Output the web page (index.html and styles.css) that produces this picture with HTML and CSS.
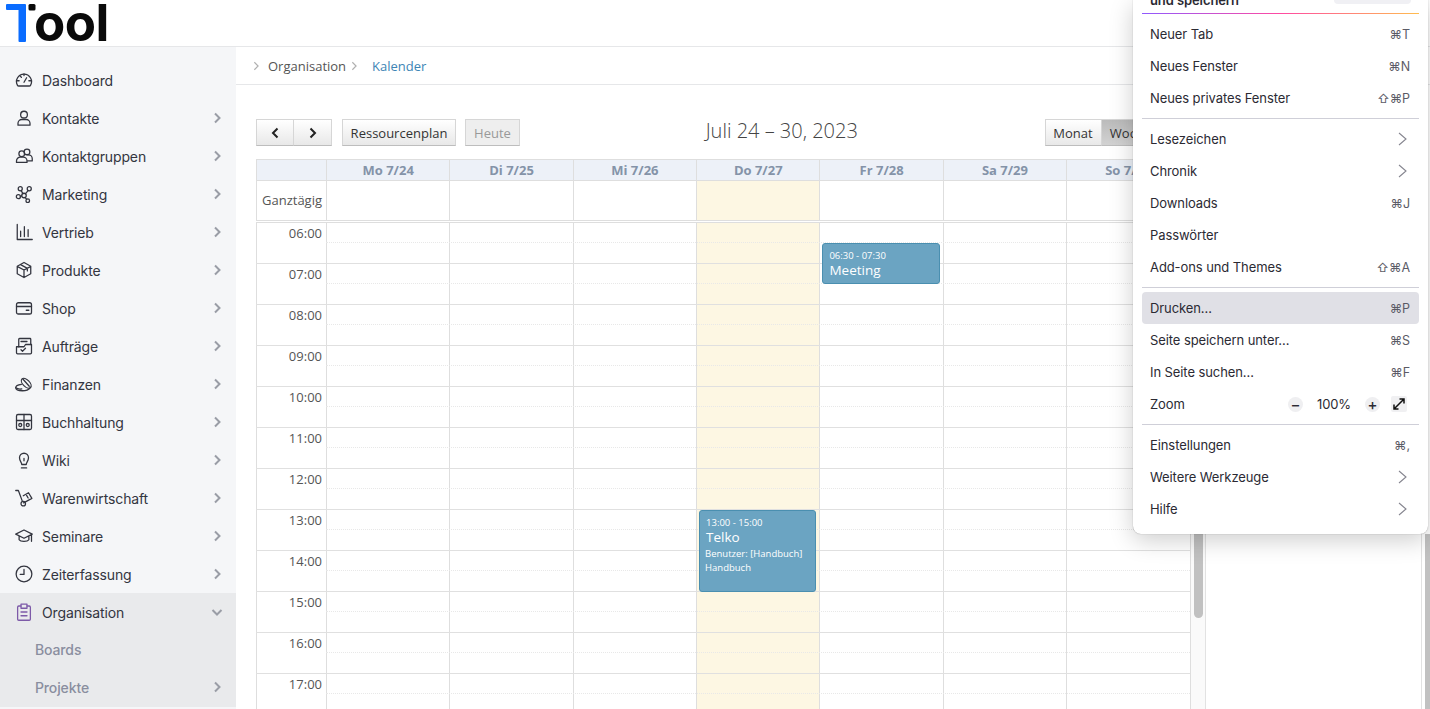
FILE: index.html
```html
<!DOCTYPE html>
<html lang="de">
<head>
<meta charset="utf-8">
<title>Kalender</title>
<link rel="stylesheet" href="styles.css">
</head>
<body>
<header class="topbar">
  <div class="logo">
    <svg class="logo-mark" viewBox="0 0 30 38" aria-hidden="true"><path class="logo-blue" d="M1 0h18a1 1 0 0 1 1 1v36a1 1 0 0 1-1 1h-5.500a1 1 0 0 1-1-1V6H1a1 1 0 0 1-1-1V1a1 1 0 0 1 1-1z"/><rect class="logo-black" x="22.500" y="0" width="7" height="6.500" rx="1.500"/></svg>
    <span class="logo-text">ool</span>
  </div>
</header>
<div class="layout">
  <nav class="sidebar">
    <a class="nav-item"><svg class="ico" viewBox="0 0 24 24"><path d="M5 20h14a2 2 0 0 0 1.800-1.100A10 10 0 1 0 3.200 18.900 2 2 0 0 0 5 20z"/><path d="M12 15l3.500-6M7 6.500l1.500 2M3 13h2.500M18.500 13H21M12 4v2"/></svg><span class="nav-label">Dashboard</span></a>
    <a class="nav-item"><svg class="ico" viewBox="0 0 24 24"><circle cx="12" cy="7.500" r="4.500"/><path d="M4 21.500v-2.500a5 5 0 0 1 5-5h6a5 5 0 0 1 5 5v2.500z"/></svg><span class="nav-label">Kontakte</span><svg class="chev" viewBox="0 0 8 12"><path d="M2 1.500L6.500 6 2 10.500"/></svg></a>
    <a class="nav-item"><svg class="ico" viewBox="0 0 24 24"><circle cx="9" cy="9" r="3.800"/><circle cx="16" cy="6.500" r="3.800"/><path d="M2 20.500v-2a5 5 0 0 1 5-5h4a5 5 0 0 1 5 5v2zM16 10.500h2a5 5 0 0 1 5 5v3h-7"/></svg><span class="nav-label">Kontaktgruppen</span><svg class="chev" viewBox="0 0 8 12"><path d="M2 1.500L6.500 6 2 10.500"/></svg></a>
    <a class="nav-item"><svg class="ico" viewBox="0 0 24 24"><circle cx="7" cy="5" r="2.700"/><circle cx="19" cy="5" r="2.700"/><circle cx="12" cy="14" r="3"/><circle cx="4.500" cy="15.500" r="2.700"/><circle cx="17" cy="21" r="2.400"/><path d="M8.300 7.500l2.200 4M17.500 7.500L14 11.500M7.200 15.200L9 14.600M13.500 16.800l2.200 2.300"/></svg><span class="nav-label">Marketing</span><svg class="chev" viewBox="0 0 8 12"><path d="M2 1.500L6.500 6 2 10.500"/></svg></a>
    <a class="nav-item"><svg class="ico" viewBox="0 0 24 24"><path d="M3 2v20h20M7.500 18v-7M12.500 18V5M17.500 18v-9"/></svg><span class="nav-label">Vertrieb</span><svg class="chev" viewBox="0 0 8 12"><path d="M2 1.500L6.500 6 2 10.500"/></svg></a>
    <a class="nav-item"><svg class="ico" viewBox="0 0 24 24"><path d="M12 2l9 5v10l-9 5-9-5V7zM3.500 7.500L12 12l8.500-4.500M12 12v10M7.500 4.800l9 5v3.500"/></svg><span class="nav-label">Produkte</span><svg class="chev" viewBox="0 0 8 12"><path d="M2 1.500L6.500 6 2 10.500"/></svg></a>
    <a class="nav-item"><svg class="ico" viewBox="0 0 24 24"><rect x="2" y="5" width="20" height="15" rx="2.500"/><path d="M2 10h20M15 15h3.500"/></svg><span class="nav-label">Shop</span><svg class="chev" viewBox="0 0 8 12"><path d="M2 1.500L6.500 6 2 10.500"/></svg></a>
    <a class="nav-item"><svg class="ico" viewBox="0 0 24 24"><path d="M5 13V3a1 1 0 0 1 1-1h14a1 1 0 0 1 1 1v7"/><path d="M2 13h10l2-3h8v11a1.500 1.500 0 0 1-1.500 1.500h-17A1.500 1.500 0 0 1 2 21zM8 6h8M8 17l2 2 4-4"/></svg><span class="nav-label">Aufträge</span><svg class="chev" viewBox="0 0 8 12"><path d="M2 1.500L6.500 6 2 10.500"/></svg></a>
    <a class="nav-item"><svg class="ico" viewBox="0 0 24 24"><ellipse cx="15" cy="11" rx="4.500" ry="8" transform="rotate(-45 15 11)"/><path d="M11 6l8 9M8.500 12.500C4 13 1 15 1 17c0 2.500 4 4 9 4 4 0 8-1 10-3.500"/><path d="M1 17c2 1.500 5 2 8 1.500"/></svg><span class="nav-label">Finanzen</span><svg class="chev" viewBox="0 0 8 12"><path d="M2 1.500L6.500 6 2 10.500"/></svg></a>
    <a class="nav-item"><svg class="ico" viewBox="0 0 24 24"><rect x="2" y="2" width="20" height="20" rx="2"/><path d="M2 10h20M12 2v20"/><circle cx="7" cy="16" r="2"/><circle cx="17" cy="16" r="2"/></svg><span class="nav-label">Buchhaltung</span><svg class="chev" viewBox="0 0 8 12"><path d="M2 1.500L6.500 6 2 10.500"/></svg></a>
    <a class="nav-item"><svg class="ico" viewBox="0 0 24 24"><path d="M9 18h6c0-3 3-4.500 3-9A6 6 0 0 0 6 9c0 4.500 3 6 3 9zM8.500 22.500h7M12 10v3"/></svg><span class="nav-label">Wiki</span><svg class="chev" viewBox="0 0 8 12"><path d="M2 1.500L6.500 6 2 10.500"/></svg></a>
    <a class="nav-item"><svg class="ico" viewBox="0 0 24 24"><path d="M1 2h3.500l5 13.500M11 9l7-4 4.500 7.500-11 6"/><circle cx="11" cy="19.500" r="3"/><path d="M15.500 8.500l2 3.500"/></svg><span class="nav-label">Warenwirtschaft</span><svg class="chev" viewBox="0 0 8 12"><path d="M2 1.500L6.500 6 2 10.500"/></svg></a>
    <a class="nav-item"><svg class="ico" viewBox="0 0 24 24"><path d="M12 4L1 9.500 12 15l11-5.500zM5.500 12v5c2 3 11 3 13 0v-5M22 10v9"/></svg><span class="nav-label">Seminare</span><svg class="chev" viewBox="0 0 8 12"><path d="M2 1.500L6.500 6 2 10.500"/></svg></a>
    <a class="nav-item"><svg class="ico" viewBox="0 0 24 24"><circle cx="12" cy="12" r="10.500"/><path d="M12 6v6.500H7"/></svg><span class="nav-label">Zeiterfassung</span><svg class="chev" viewBox="0 0 8 12"><path d="M2 1.500L6.500 6 2 10.500"/></svg></a>
    <a class="nav-item nav-open"><svg class="ico ico-purple" viewBox="0 0 24 24"><path d="M8 4H5a1.500 1.500 0 0 0-1.500 1.500v16A1.500 1.500 0 0 0 5 23h14a1.500 1.500 0 0 0 1.500-1.500v-16A1.500 1.500 0 0 0 19 4h-3"/><path d="M8 1.500h8V7H8zM8 12h8M8 17h8"/></svg><span class="nav-label">Organisation</span><svg class="chev chev-down" viewBox="0 0 12 8"><path d="M1.500 2L6 6.500 10.500 2"/></svg></a>
    <a class="nav-sub"><span class="nav-label">Boards</span></a>
    <a class="nav-sub"><span class="nav-label">Projekte</span><svg class="chev" viewBox="0 0 8 12"><path d="M2 1.500L6.500 6 2 10.500"/></svg></a>
  </nav>

  <main class="main">
    <div class="crumbs">
      <svg class="crumb-chev" viewBox="0 0 8 12"><path d="M2 1.500L6.500 6 2 10.500"/></svg>
      <span class="crumb">Organisation</span>
      <svg class="crumb-chev crumb-chev-mid" viewBox="0 0 8 12"><path d="M2 1.500L6.500 6 2 10.500"/></svg>
      <span class="crumb crumb-active">Kalender</span>
    </div>
    <div class="workspace">
      <section class="calendar">
        <div class="toolbar">
          <div class="tool-left">
            <div class="btn-group">
              <button class="btn btn-nav"><svg class="nav-arrow" viewBox="0 0 10 12"><path d="M7.500 1.500L3 6l4.500 4.500"/></svg></button>
              <button class="btn btn-nav"><svg class="nav-arrow" viewBox="0 0 10 12"><path d="M2.500 1.500L7 6l-4.500 4.500"/></svg></button>
            </div>
            <button class="btn btn-res">Ressourcenplan</button>
            <button class="btn btn-off">Heute</button>
          </div>
          <h1 class="cal-title">Juli 24 – 30, 2023</h1>
          <div class="btn-group">
            <button class="btn btn-month">Monat</button>
            <button class="btn btn-active btn-week">Woche</button>
            <button class="btn btn-day">Tag</button>
          </div>
        </div>

        <div class="cal-head">
          <div class="hd"></div><div class="hd">Mo 7/24</div><div class="hd">Di 7/25</div><div class="hd">Mi 7/26</div><div class="hd">Do 7/27</div><div class="hd">Fr 7/28</div><div class="hd">Sa 7/29</div><div class="hd">So 7/30</div>
          <div class="allday allday-label">Ganztägig</div><div class="allday"></div><div class="allday"></div><div class="allday"></div><div class="allday today"></div><div class="allday"></div><div class="allday"></div><div class="allday"></div>
        </div>

        <div class="cal-body">
          <div class="cols">
            <div class="col"></div>
            <div class="col"></div>
            <div class="col"></div>
            <div class="col"></div>
            <div class="col today">
              <div class="event ev-telko">
                <div class="ev-time">13:00 - 15:00</div>
                <div class="ev-title">Telko</div>
                <div class="ev-note">Benutzer: [Handbuch]</div>
                <div class="ev-note">Handbuch</div>
              </div>
            </div>
            <div class="col">
              <div class="event ev-meeting">
                <div class="ev-time">06:30 - 07:30</div>
                <div class="ev-title">Meeting</div>
              </div>
            </div>
            <div class="col"></div>
            <div class="col"></div>
          </div>
          <div class="slot">06:00</div>
          <div class="slot">07:00</div>
          <div class="slot">08:00</div>
          <div class="slot">09:00</div>
          <div class="slot">10:00</div>
          <div class="slot">11:00</div>
          <div class="slot">12:00</div>
          <div class="slot">13:00</div>
          <div class="slot">14:00</div>
          <div class="slot">15:00</div>
          <div class="slot">16:00</div>
          <div class="slot">17:00</div>
        </div>
      </section>
      <div class="cal-scroll"><div class="cal-thumb"></div></div>
      <aside class="panel"></aside>
      <div class="page-scroll"></div>
    </div>
  </main>
</div>

<div class="menu">
  <div class="menu-top"><span class="menu-top-text">und speichern</span><span class="menu-top-btn"></span></div>
  <div class="sep sep-grad"></div>
  <div class="row"><span>Neuer Tab</span><kbd class="key">⌘T</kbd></div>
  <div class="row"><span>Neues Fenster</span><kbd class="key">⌘N</kbd></div>
  <div class="row"><span>Neues privates Fenster</span><kbd class="key">⇧⌘P</kbd></div>
  <div class="sep"></div>
  <div class="row"><span>Lesezeichen</span><svg class="sub-chev" viewBox="0 0 9 14"><path d="M1 1l7 6-7 6"/></svg></div>
  <div class="row"><span>Chronik</span><svg class="sub-chev" viewBox="0 0 9 14"><path d="M1 1l7 6-7 6"/></svg></div>
  <div class="row"><span>Downloads</span><kbd class="key">⌘J</kbd></div>
  <div class="row"><span>Passwörter</span></div>
  <div class="row"><span>Add-ons und Themes</span><kbd class="key">⇧⌘A</kbd></div>
  <div class="sep"></div>
  <div class="row row-hover"><span>Drucken…</span><kbd class="key">⌘P</kbd></div>
  <div class="row"><span>Seite speichern unter…</span><kbd class="key">⌘S</kbd></div>
  <div class="row"><span>In Seite suchen…</span><kbd class="key">⌘F</kbd></div>
  <div class="row">
    <span class="zoom-label">Zoom</span>
    <span class="zoom-btn">−</span>
    <span class="zoom-val">100%</span>
    <span class="zoom-btn">+</span>
    <span class="zoom-full"><svg viewBox="0 0 16 16"><path d="M3.500 12.500l9-9M8.500 3h4.500v4.500M3 8.500V13h4.500"/></svg></span>
  </div>
  <div class="sep"></div>
  <div class="row"><span>Einstellungen</span><kbd class="key">⌘,</kbd></div>
  <div class="row"><span>Weitere Werkzeuge</span><svg class="sub-chev" viewBox="0 0 9 14"><path d="M1 1l7 6-7 6"/></svg></div>
  <div class="row"><span>Hilfe</span><svg class="sub-chev" viewBox="0 0 9 14"><path d="M1 1l7 6-7 6"/></svg></div>
</div>
</body>
</html>
```

FILE: styles.css
```css
* { box-sizing: border-box; }
html, body { margin: 0; height: 709px; overflow: hidden; background: #fff; }
body { font-family: Inter, "Noto Sans", sans-serif; position: relative; }

.topbar { height: 47px; border-bottom: 1px solid #e6e7e9; display: flex; align-items: flex-start; }
.logo { display: flex; align-items: flex-start; margin-left: 6px; margin-top: 4px; }
.logo-mark { width: 30px; height: 38px; flex: none; }
.logo-blue { fill: #0a6cff; }
.logo-black { fill: #0a0a0a; }
.logo-text { font-family: Inter, sans-serif; font-weight: 700; font-size: 51px; line-height: 62px; margin-top: -12px; color: #0a0a0a; margin-left: -2px; letter-spacing: -0.5px; }

.layout { display: flex; height: 662px; }
.sidebar { width: 236px; flex: none; background: #f5f6f8; padding-top: 14px; height: 662px; overflow: hidden; }
.nav-item, .nav-sub { display: flex; align-items: center; height: 38px; color: #33353f; font-size: 14px; letter-spacing: -0.13px; padding-left: 15px; padding-right: 15px; }
.nav-item .nav-label { margin-left: 9px; flex: 1; }
.nav-open { background: #e9eaec; }
.nav-sub { background: #e9eaec; color: #8a8e9f; font-weight: 500; padding-left: 35px; padding-bottom: 2px; }
.nav-sub .nav-label { flex: 1; }
.ico { width: 18px; height: 18px; flex: none; fill: none; stroke: #33353f; stroke-width: 1.7; stroke-linecap: round; stroke-linejoin: round; }
.ico-purple { stroke: #7d5aa8; }
.chev { width: 8px; height: 12px; fill: none; stroke: #9a9da6; stroke-width: 2; flex: none; }
.chev-down { width: 12px; height: 8px; margin-right: -2px; }

.main { flex: 1; min-width: 0; display: flex; flex-direction: column; }
.crumbs { height: 38px; border-bottom: 1px solid #e6e7e9; display: flex; align-items: center; padding-left: 16px; font-family: "Open Sans", sans-serif; font-size: 13px; color: #555; flex: none; }
.crumb-chev { width: 8px; height: 10px; fill: none; stroke: #b0b0b0; stroke-width: 1.4; margin-right: 8px; }
.crumb-chev-mid { margin-left: 4px; margin-right: 14px; }
.crumb-active { color: #3d85b5; }

.workspace { flex: 1; display: flex; padding-left: 20px; min-height: 0; }
.calendar { width: 934.500px; flex: none; padding-top: 34px; font-family: "Open Sans", sans-serif; }
.toolbar { display: flex; align-items: flex-start; justify-content: space-between; height: 40px; }
.tool-left { display: flex; gap: 9px; }
.btn-group { display: flex; }
.btn { height: 27px; padding: 0; font-family: "Open Sans", sans-serif; font-size: 13px; color: #333; border: 1px solid #d6d6d6; border-bottom-color: #bdbdbd; background: linear-gradient(#fff, #e8e8e8); display: flex; align-items: center; justify-content: center; }
.btn-nav { width: 38px; }
.btn-nav + .btn-nav { width: 39px; margin-left: -1px; }
.nav-arrow { width: 10px; height: 12px; fill: none; stroke: #222; stroke-width: 2; }
.btn-res { width: 114px; margin-left: 1px; }
.btn-off { width: 55px; color: #999; background: #eee; }
.btn-month { width: 57px; }
.btn-week { width: 60px; margin-left: -1px; }
.btn-day { width: 31px; margin-left: -1px; }
.btn-active { background: linear-gradient(#bbb, #d2d2d2); }
.cal-title { margin: 0 1px 0 0; font-weight: 300; font-size: 20px; line-height: 24px; color: #444; }

.cal-head { display: grid; grid-template-columns: 70px repeat(7, 1fr); grid-template-rows: 21px 39px; border-top: 1px solid #dedede; border-right: 1px solid #dedede; border-bottom: 3px double #dedede; height: 64px; }
.hd { background: #edf1f8; border-left: 1px solid #dedede; border-bottom: 1px solid #dedede; font-weight: 700; font-size: 13px; line-height: 20px; color: #8493a8; text-align: center; }
.allday { border-left: 1px solid #dedede; }
.allday-label { font-size: 13px; line-height: 38px; color: #555; text-align: right; padding-right: 4px; }
.today { background: #fdf7e3; }

.cal-body { position: relative; border-right: 1px solid #dedede; }
.cols { position: absolute; inset: 0; display: grid; grid-template-columns: 70px repeat(7, 1fr); }
.col { position: relative; border-left: 1px solid #dedede; }
.slot { position: relative; z-index: 1; height: 41px; border-bottom: 1px solid #e0e0e0; font-size: 13px; line-height: 20px; color: #555; padding-right: calc(100% - 66px); text-align: right; }
.slot::after { content: ""; position: absolute; left: 70px; right: 0; top: 19px; border-top: 1px dotted #e8e8e8; }
.event { position: absolute; z-index: 2; left: 2px; right: 3px; background: #6ba4c2; border: 1px solid #4a8fb0; border-radius: 3px; color: #fff; padding: 5px 6px; overflow: hidden; }
.ev-meeting { top: 20px; height: 41px; }
.ev-telko { top: 287px; height: 82px; }
.ev-time { font-size: 9.500px; line-height: 14px; }
.ev-title { font-size: 13.500px; font-weight: 500; line-height: 15px; }
.ev-note { font-size: 9.500px; line-height: 14px; margin-left: -1px; }
.ev-telko .ev-title { margin-bottom: 2px; }

.cal-scroll { width: 14.500px; flex: none; background: #fafafa; padding-top: 139px; }
.cal-thumb { width: 9px; margin-left: 3px; height: 394px; background: #c1c1c1; border-radius: 0 0 5px 5px; }
.panel { width: 217px; flex: none; border-left: 1px solid #e2e2e2; border-right: 1px solid #e2e2e2; }
.page-scroll { width: 5px; margin-left: 3px; margin-top: 449px; background: #c1c1c1; flex: none; }

.menu { position: absolute; z-index: 10; top: 0; left: 1133px; width: 295px; height: 534px; background: #fff; border-radius: 0 0 8px 8px; box-shadow: 0 0 1px rgba(0,0,0,.45), 0 6px 24px rgba(0,0,0,.2); padding: 0 9px; font-size: 13px; letter-spacing: -0.09px; color: #2b2a33; }
.menu-top { height: 13px; display: flex; align-items: flex-end; justify-content: space-between; padding: 0 8px; }
.menu-top-text { font-weight: 600; line-height: 16px; margin-bottom: 5px; }
.menu-top-btn { width: 77px; height: 16px; background: #f0f0f4; border-radius: 4px; margin-bottom: 9px; }
.sep { height: 1px; background: #cfcfd8; margin: 4px 0; }
.sep-grad { margin-top: 0; background: linear-gradient(90deg, #9059ff, #ff4aa2, #ffbd4f); }
.row { height: 32px; display: flex; align-items: center; justify-content: space-between; padding: 0 9px 0 8px; border-radius: 4px; }
.row-hover { background: #e0e0e6; }
.key { font-family: Inter, "DejaVu Sans", sans-serif; font-size: 12.500px; color: #5b5b66; }
.sub-chev { width: 9px; height: 14px; fill: none; stroke: #85858f; stroke-width: 1.1; margin-right: 3px; }
.zoom-label { margin-right: auto; }
.zoom-btn { width: 15px; height: 15px; border-radius: 50%; background: #efeff1; display: flex; align-items: center; justify-content: center; font-size: 15px; font-weight: 500; line-height: 15px; }
.zoom-val { width: 62px; text-align: center; }
.zoom-full { width: 16px; height: 16px; background: #f0f0f2; border-radius: 2px; margin-left: 11px; margin-right: 3px; display: flex; }
.zoom-full svg { width: 16px; height: 16px; fill: none; stroke: #111; stroke-width: 1.5; }
```
